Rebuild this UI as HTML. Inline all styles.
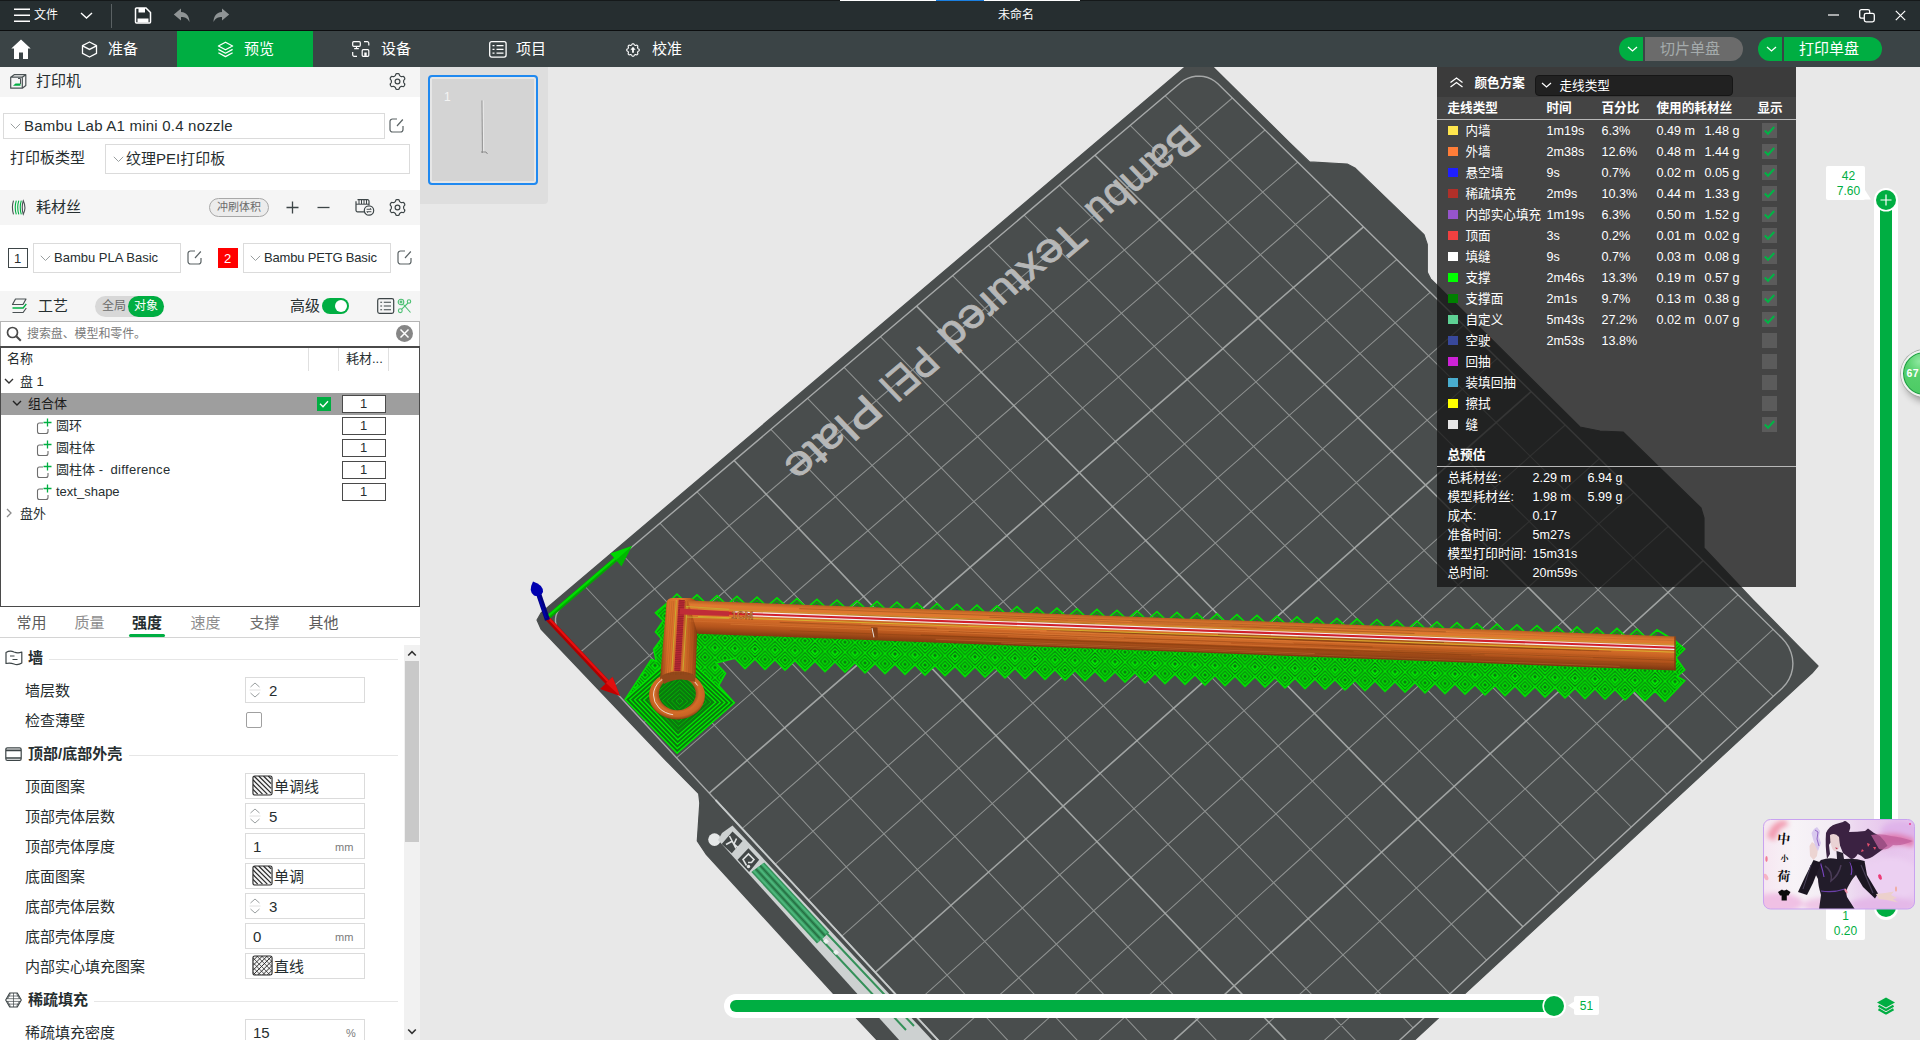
<!DOCTYPE html>
<html lang="zh-CN">
<head>
<meta charset="utf-8">
<title>未命名</title>
<style>
*{box-sizing:border-box;margin:0;padding:0}
html,body{width:1920px;height:1040px;overflow:hidden;background:#e8e8e8}
body{font-family:"Liberation Sans","Noto Sans CJK SC",sans-serif;font-size:15px;color:#262e30;position:relative}
.abs{position:absolute}
.t{position:absolute;white-space:nowrap;line-height:1}
svg{position:absolute;overflow:visible}
/* title bar */
#titlebar{position:absolute;left:0;top:0;width:1920px;height:31px;background:#262e30;border-top:1px solid #15191a;border-bottom:1px solid #0c0e0f}
#tabbar{position:absolute;left:0;top:31px;width:1920px;height:36px;background:#3b4446}
#tabbar .act{position:absolute;left:177px;top:0;width:136px;height:36px;background:#00ae42}
#tabbar .t{color:#fff;font-size:15px;top:10px}
/* sidebar */
#side{position:absolute;left:0;top:67px;width:420px;height:973px;background:#fff}
.sec{position:absolute;left:0;width:420px;background:#f5f5f5}
.box{position:absolute;border:1px solid #dbdbdb;background:#fff}
.lg{font-size:12.600px;color:#fff}
#legend .t{margin-top:1.200px}
</style>
</head>
<body>
<div id="titlebar">
  <div class="abs" style="left:840px;top:-1px;width:240px;height:1px;background:#fff"></div>
  <div class="abs" style="left:936px;top:-1px;width:48px;height:1px;background:#1a7fe0"></div>
  <svg style="left:14px;top:7px" width="17" height="15" viewBox="0 0 17 15"><path d="M0 1.2h16M0 7.2h16M0 13.2h16" stroke="#fff" stroke-width="1.6" fill="none"/></svg>
  <div class="t" style="left:34px;top:8px;font-size:12px;color:#fff">文件</div>
  <svg style="left:80px;top:11px" width="13" height="8" viewBox="0 0 13 8"><path d="M1 1l5.5 5 5.5-5" stroke="#fff" stroke-width="1.4" fill="none"/></svg>
  <div class="abs" style="left:111px;top:3px;width:1px;height:24px;background:#5a6163"></div>
  <svg style="left:135px;top:6px" width="17" height="17" viewBox="0 0 17 17"><path d="M1.5 1h9.5l4.5 4.5v9.5a1 1 0 0 1-1 1h-13a1 1 0 0 1-1-1v-13a1 1 0 0 1 1-1z" fill="none" stroke="#fff" stroke-width="1.5"/><path d="M3.5 1h6.5v4.5h-6.5z" fill="#fff"/><path d="M2.5 11.5h11v4h-11z" fill="#fff"/></svg>
  <svg style="left:173px;top:7px" width="18" height="15" viewBox="0 0 18 15"><path d="M8 0.5L0.8 6.5 8 12.5V9c4 0 6.5 1.2 8.5 5 0-5-2.5-9.5-8.5-10z" fill="#8f9495"/></svg>
  <svg style="left:212px;top:7px" width="18" height="15" viewBox="0 0 18 15"><path d="M10 0.5L17.2 6.5 10 12.5V9c-4 0-6.500 1.2-8.500 5 0-5 2.500-9.500 8.500-10z" fill="#8f9495"/></svg>
  <div class="t" style="left:998px;top:8px;font-size:12px;color:#fff">未命名</div>
  <svg style="left:1828px;top:13px" width="12" height="2"><path d="M0 1h11" stroke="#fff" stroke-width="1.2"/></svg>
  <svg style="left:1859px;top:8px" width="17" height="14" viewBox="0 0 17 14"><rect x="0.7" y="0.7" width="10" height="8.500" rx="1.8" fill="none" stroke="#fff" stroke-width="1.3"/><rect x="5.300" y="4.300" width="10" height="8.500" rx="1.8" fill="#262e30" stroke="#fff" stroke-width="1.3"/></svg>
  <svg style="left:1895px;top:9px" width="11" height="11" viewBox="0 0 11 11"><path d="M0.800 0.800l9.400 9.400M10.200 0.800l-9.400 9.400" stroke="#fff" stroke-width="1.2"/></svg>
</div>
<div id="tabbar">
  <div class="act"></div>
  <svg style="left:11px;top:8px" width="20" height="21" viewBox="0 0 20 21"><path d="M10 0.500L0.300 9.500h2.700v10.500h5v-6.500h4v6.500h5V9.500h2.700z" fill="#fff"/></svg>
  <svg style="left:81px;top:10px" width="17" height="17" viewBox="0 0 17 17"><path d="M8.500 1L15.500 4.600V12.400L8.500 16 1.500 12.400V4.600z" fill="none" stroke="#fff" stroke-width="1.300" stroke-linejoin="round"/><path d="M1.500 4.800L8.500 8.400l7-3.600" fill="none" stroke="#fff" stroke-width="1.300"/></svg>
  <div class="t" style="left:108px">准备</div>
  <svg style="left:217px;top:10px" width="17" height="17" viewBox="0 0 17 17"><path d="M8.500 1.200L15.600 5 8.500 8.800 1.400 5z" fill="none" stroke="#fff" stroke-width="1.300" stroke-linejoin="round"/><path d="M1.400 8.400L8.500 12.200l7.100-3.800M1.400 11.800L8.500 15.600l7.100-3.800" fill="none" stroke="#fff" stroke-width="1.300" stroke-linejoin="round"/></svg>
  <div class="t" style="left:244px">预览</div>
  <svg style="left:352px;top:10px" width="18" height="16" viewBox="0 0 18 16"><rect x="0.700" y="0.700" width="7.600" height="4.600" rx="1" fill="none" stroke="#fff" stroke-width="1.200"/><path d="M4.500 5.300v2.400M2.200 7.700h4.600M12 0.700h3.300a1.500 1.500 0 0 1 1.500 1.500v2.300M0.700 11v2.800a1.500 1.500 0 0 0 1.500 1.500H5" fill="none" stroke="#fff" stroke-width="1.200"/><rect x="10.200" y="8.700" width="6.600" height="6.600" rx="1" fill="none" stroke="#fff" stroke-width="1.200"/><path d="M12.300 11.500h2.400v3.400h-2.400z" fill="#fff"/></svg>
  <div class="t" style="left:381px">设备</div>
  <svg style="left:489px;top:10px" width="18" height="17" viewBox="0 0 18 17"><rect x="0.700" y="0.700" width="16.400" height="15.400" rx="2" fill="none" stroke="#fff" stroke-width="1.300"/><path d="M3.500 4.600h2M3.500 8.400h2M3.500 12.200h2M7.500 4.600h7M7.500 8.400h7M7.500 12.200h7" stroke="#fff" stroke-width="1.300"/></svg>
  <div class="t" style="left:516px">项目</div>
  <svg style="left:626px;top:12px" width="14" height="14" viewBox="0 0 14 14"><path d="M13.30 7.00L13.24 7.41L13.07 7.80L12.59 8.11L12.10 8.37L11.87 8.65L11.71 8.95L11.61 9.27L11.57 9.64L11.74 10.17L11.86 10.73L11.71 11.13L11.45 11.45L11.13 11.71L10.73 11.86L10.17 11.74L9.64 11.57L9.27 11.61L8.95 11.71L8.65 11.87L8.37 12.10L8.11 12.59L7.80 13.07L7.41 13.24L7.00 13.30L6.59 13.24L6.20 13.07L5.89 12.59L5.63 12.10L5.35 11.87L5.05 11.71L4.73 11.61L4.36 11.57L3.83 11.74L3.27 11.86L2.87 11.71L2.55 11.45L2.29 11.13L2.14 10.73L2.26 10.17L2.43 9.64L2.39 9.27L2.29 8.95L2.13 8.65L1.90 8.37L1.41 8.11L0.93 7.80L0.76 7.41L0.70 7.00L0.76 6.59L0.93 6.20L1.41 5.89L1.90 5.63L2.13 5.35L2.29 5.05L2.39 4.73L2.43 4.36L2.26 3.83L2.14 3.27L2.29 2.87L2.55 2.55L2.87 2.29L3.27 2.14L3.83 2.26L4.36 2.43L4.73 2.39L5.05 2.29L5.35 2.13L5.63 1.90L5.89 1.41L6.20 0.93L6.59 0.76L7.00 0.70L7.41 0.76L7.80 0.93L8.11 1.41L8.37 1.90L8.65 2.13L8.95 2.29L9.27 2.39L9.64 2.43L10.17 2.26L10.73 2.14L11.13 2.29L11.45 2.55L11.71 2.87L11.86 3.27L11.74 3.83L11.57 4.36L11.61 4.73L11.71 5.05L11.87 5.35L12.10 5.63L12.59 5.89L13.07 6.20L13.24 6.59Z" fill="none" stroke="#fff" stroke-width="1.100"/><path d="M7 3.800L4.400 6.800h1.700v3h1.800v-3h1.700z" fill="#fff"/></svg>
  <div class="t" style="left:652px">校准</div>
  <!-- slice / print buttons -->
  <div class="abs" style="left:1619px;top:6px;width:24px;height:24px;background:#00ae42;border-radius:12px 0 0 12px"></div>
  <svg style="left:1627px;top:15px" width="11" height="7" viewBox="0 0 11 7"><path d="M1 1l4.500 4 4.500-4" stroke="#fff" stroke-width="1.300" fill="none"/></svg>
  <div class="abs" style="left:1645px;top:6px;width:98px;height:24px;background:#6b6b6b;border-radius:0 12px 12px 0"></div>
  <div class="t" style="left:1660px;top:10px;color:#a5abac;font-size:15px">切片单盘</div>
  <div class="abs" style="left:1758px;top:6px;width:24px;height:24px;background:#00ae42;border-radius:12px 0 0 12px"></div>
  <svg style="left:1766px;top:15px" width="11" height="7" viewBox="0 0 11 7"><path d="M1 1l4.500 4 4.500-4" stroke="#fff" stroke-width="1.300" fill="none"/></svg>
  <div class="abs" style="left:1784px;top:6px;width:98px;height:24px;background:#00ae42;border-radius:0 12px 12px 0"></div>
  <div class="t" style="left:1799px;top:10px;font-size:15px">打印单盘</div>
</div>
<div id="side">
<!-- coordinates inside #side are page y - 67 -->
<div class="sec" style="top:0;height:30px"></div>
<svg style="left:10px;top:7px" width="17" height="15" viewBox="0 0 17 15"><path d="M0.700 3.200h11.600v11h-11.600zM0.700 3.200l3.500-2.500h11.600v10.800l-3.500 2.700M12.300 3.200l3.500-2.500" fill="none" stroke="#4a5254" stroke-width="1.200" stroke-linejoin="round"/><path d="M8 4.500h2.500v5.500" fill="none" stroke="#4a5254" stroke-width="1"/><path d="M3 11.800l2.500-2.200h5v2.200z" fill="#00ae42"/></svg>
<div class="t" style="left:36px;top:6px">打印机</div>
<svg class="gear" style="left:389px;top:6px" width="17" height="17" viewBox="-8.500 -8.500 17 17"><path d="M6.10 0.00L6.11 0.32L6.15 0.65L6.22 0.99L6.35 1.35L6.81 1.82L7.24 2.35L7.28 2.79L7.23 3.22L7.11 3.62L6.93 4.00L6.69 4.35L6.40 4.65L6.06 4.91L5.66 5.09L4.99 4.99L4.34 4.82L3.97 4.90L3.64 5.00L3.33 5.13L3.05 5.28L2.78 5.45L2.52 5.65L2.26 5.88L2.01 6.17L1.82 6.81L1.58 7.44L1.22 7.70L0.83 7.87L0.42 7.97L0.00 8.00L-0.42 7.97L-0.83 7.87L-1.22 7.70L-1.58 7.44L-1.82 6.81L-2.01 6.17L-2.26 5.88L-2.52 5.65L-2.78 5.45L-3.05 5.28L-3.33 5.13L-3.64 5.00L-3.97 4.90L-4.34 4.82L-4.99 4.99L-5.66 5.09L-6.06 4.91L-6.40 4.65L-6.69 4.35L-6.93 4.00L-7.11 3.62L-7.23 3.22L-7.28 2.79L-7.24 2.35L-6.81 1.82L-6.35 1.35L-6.22 0.99L-6.15 0.65L-6.11 0.32L-6.10 0.00L-6.11 -0.32L-6.15 -0.65L-6.22 -0.99L-6.35 -1.35L-6.81 -1.82L-7.24 -2.35L-7.28 -2.79L-7.23 -3.22L-7.11 -3.62L-6.93 -4.00L-6.69 -4.35L-6.40 -4.65L-6.06 -4.91L-5.66 -5.09L-4.99 -4.99L-4.34 -4.82L-3.97 -4.90L-3.64 -5.00L-3.33 -5.13L-3.05 -5.28L-2.78 -5.45L-2.52 -5.65L-2.26 -5.88L-2.01 -6.17L-1.82 -6.81L-1.58 -7.44L-1.22 -7.70L-0.83 -7.87L-0.42 -7.97L-0.00 -8.00L0.42 -7.97L0.83 -7.87L1.22 -7.70L1.58 -7.44L1.82 -6.81L2.01 -6.17L2.26 -5.88L2.52 -5.65L2.78 -5.45L3.05 -5.28L3.33 -5.13L3.64 -5.00L3.97 -4.90L4.34 -4.82L4.99 -4.99L5.66 -5.09L6.06 -4.91L6.40 -4.65L6.69 -4.35L6.93 -4.00L7.11 -3.62L7.23 -3.22L7.28 -2.79L7.24 -2.35L6.81 -1.82L6.35 -1.35L6.22 -0.99L6.15 -0.65L6.11 -0.32Z" fill="none" stroke="#3d4547" stroke-width="1.200" stroke-linejoin="round"/><circle r="2.400" fill="none" stroke="#3d4547" stroke-width="1.200"/></svg>
<div class="box" style="left:3px;top:46px;width:382px;height:26px"></div>
<svg style="left:10px;top:56px" width="11" height="7" viewBox="0 0 11 7"><path d="M0.800 0.800l4.700 4.700 4.700-4.700" stroke="#9a9fa0" stroke-width="1" fill="none"/></svg>
<div class="t" id="prn" style="left:24px;top:51px;font-size:15px;letter-spacing:0.22px">Bambu Lab A1 mini 0.4 nozzle</div>
<svg class="edit" style="left:389px;top:51px" width="15" height="15" viewBox="0 0 15 15"><path d="M8 1H3.500A2.500 2.500 0 0 0 1 3.500v8A2.500 2.500 0 0 0 3.500 14h8a2.500 2.500 0 0 0 2.500-2.500V8" fill="none" stroke="#5a6264" stroke-width="1.200"/><path d="M13.800 1.500L8 8" stroke="#5a6264" stroke-width="1.200"/></svg>
<div class="t" style="left:10px;top:83px">打印板类型</div>
<div class="box" style="left:105px;top:77px;width:305px;height:30px"></div>
<svg style="left:113px;top:89px" width="11" height="7" viewBox="0 0 11 7"><path d="M0.800 0.800l4.700 4.700 4.700-4.700" stroke="#9a9fa0" stroke-width="1" fill="none"/></svg>
<div class="t" style="left:126px;top:84px">纹理PEI打印板</div>

<div class="sec" style="top:123px;height:35px"></div>
<svg style="left:11px;top:133px" width="16" height="15" viewBox="0 0 16 15"><path d="M2.500 0.700Q0.300 7.500 2.500 14.300" fill="none" stroke="#4a5254" stroke-width="1.100"/><path d="M5.300 0.700Q3.100 7.500 5.300 14.300M7.800 0.700Q5.600 7.500 7.800 14.300M10.300 0.700Q8.100 7.500 10.300 14.300" fill="none" stroke="#00ae42" stroke-width="1.100"/><path d="M12.300 0.700Q10.100 7.500 12.300 14.300Q15.500 7.500 12.300 0.700z" fill="none" stroke="#4a5254" stroke-width="1.100"/></svg>
<div class="t" style="left:36px;top:132px">耗材丝</div>
<div class="abs" style="left:209px;top:131px;width:60px;height:19px;border:1px solid #a8a8a8;border-radius:10px;background:#ececec"></div>
<div class="t" style="left:217px;top:135px;font-size:11px;color:#6b6b6b">冲刷体积</div>
<svg style="left:286px;top:134px" width="13" height="13" viewBox="0 0 13 13"><path d="M6.500 0.500v12M0.500 6.500h12" stroke="#3d4547" stroke-width="1.300"/></svg>
<svg style="left:317px;top:139px" width="13" height="3" viewBox="0 0 13 3"><path d="M0.500 1.500h12" stroke="#3d4547" stroke-width="1.300"/></svg>
<svg style="left:355px;top:132px" width="20" height="17" viewBox="0 0 20 17"><path d="M2.500 0.700h10a1.500 1.500 0 0 1 1.500 1.500V6M9 12.800H2.500A1.500 1.500 0 0 1 1 11.300V2.200" fill="none" stroke="#3d4547" stroke-width="1.200"/><path d="M1 5.200h13M4 1v4M6.500 1v4M9 1v4M11.500 1v4" stroke="#3d4547" stroke-width="1"/><circle cx="14" cy="11.500" r="4.700" fill="#f5f5f5" stroke="#3d4547" stroke-width="1.200"/><path d="M11.600 10.300h4.600l-1.200-1.200M16.400 12.700h-4.600l1.200 1.200" fill="none" stroke="#3d4547" stroke-width="0.900"/></svg>
<svg class="gear" style="left:389px;top:132px" width="17" height="17" viewBox="-8.500 -8.500 17 17"><path d="M6.10 0.00L6.11 0.32L6.15 0.65L6.22 0.99L6.35 1.35L6.81 1.82L7.24 2.35L7.28 2.79L7.23 3.22L7.11 3.62L6.93 4.00L6.69 4.35L6.40 4.65L6.06 4.91L5.66 5.09L4.99 4.99L4.34 4.82L3.97 4.90L3.64 5.00L3.33 5.13L3.05 5.28L2.78 5.45L2.52 5.65L2.26 5.88L2.01 6.17L1.82 6.81L1.58 7.44L1.22 7.70L0.83 7.87L0.42 7.97L0.00 8.00L-0.42 7.97L-0.83 7.87L-1.22 7.70L-1.58 7.44L-1.82 6.81L-2.01 6.17L-2.26 5.88L-2.52 5.65L-2.78 5.45L-3.05 5.28L-3.33 5.13L-3.64 5.00L-3.97 4.90L-4.34 4.82L-4.99 4.99L-5.66 5.09L-6.06 4.91L-6.40 4.65L-6.69 4.35L-6.93 4.00L-7.11 3.62L-7.23 3.22L-7.28 2.79L-7.24 2.35L-6.81 1.82L-6.35 1.35L-6.22 0.99L-6.15 0.65L-6.11 0.32L-6.10 0.00L-6.11 -0.32L-6.15 -0.65L-6.22 -0.99L-6.35 -1.35L-6.81 -1.82L-7.24 -2.35L-7.28 -2.79L-7.23 -3.22L-7.11 -3.62L-6.93 -4.00L-6.69 -4.35L-6.40 -4.65L-6.06 -4.91L-5.66 -5.09L-4.99 -4.99L-4.34 -4.82L-3.97 -4.90L-3.64 -5.00L-3.33 -5.13L-3.05 -5.28L-2.78 -5.45L-2.52 -5.65L-2.26 -5.88L-2.01 -6.17L-1.82 -6.81L-1.58 -7.44L-1.22 -7.70L-0.83 -7.87L-0.42 -7.97L-0.00 -8.00L0.42 -7.97L0.83 -7.87L1.22 -7.70L1.58 -7.44L1.82 -6.81L2.01 -6.17L2.26 -5.88L2.52 -5.65L2.78 -5.45L3.05 -5.28L3.33 -5.13L3.64 -5.00L3.97 -4.90L4.34 -4.82L4.99 -4.99L5.66 -5.09L6.06 -4.91L6.40 -4.65L6.69 -4.35L6.93 -4.00L7.11 -3.62L7.23 -3.22L7.28 -2.79L7.24 -2.35L6.81 -1.82L6.35 -1.35L6.22 -0.99L6.15 -0.65L6.11 -0.32Z" fill="none" stroke="#3d4547" stroke-width="1.200" stroke-linejoin="round"/><circle r="2.400" fill="none" stroke="#3d4547" stroke-width="1.200"/></svg>

<div class="abs" style="left:8px;top:181px;width:20px;height:20px;border:1px solid #3d4547;background:#fff"></div>
<div class="t" style="left:14px;top:185px;font-size:13px">1</div>
<div class="box" style="left:33px;top:176px;width:148px;height:30px"></div>
<svg style="left:40px;top:188px" width="11" height="7" viewBox="0 0 11 7"><path d="M0.800 0.800l4.700 4.700 4.700-4.700" stroke="#9a9fa0" stroke-width="1" fill="none"/></svg>
<div class="t" id="f1" style="left:54px;top:184px;font-size:13px">Bambu PLA Basic</div>
<svg class="edit" style="left:187px;top:183px" width="15" height="15" viewBox="0 0 15 15"><path d="M8 1H3.500A2.500 2.500 0 0 0 1 3.500v8A2.500 2.500 0 0 0 3.500 14h8a2.500 2.500 0 0 0 2.500-2.500V8" fill="none" stroke="#5a6264" stroke-width="1.200"/><path d="M13.800 1.500L8 8" stroke="#5a6264" stroke-width="1.200"/></svg>
<div class="abs" style="left:218px;top:181px;width:20px;height:20px;background:#f00"></div>
<div class="t" style="left:224px;top:185px;font-size:13px;color:#fff">2</div>
<div class="box" style="left:243px;top:176px;width:148px;height:30px"></div>
<svg style="left:250px;top:188px" width="11" height="7" viewBox="0 0 11 7"><path d="M0.800 0.800l4.700 4.700 4.700-4.700" stroke="#9a9fa0" stroke-width="1" fill="none"/></svg>
<div class="t" id="f2" style="left:264px;top:184px;font-size:13px;letter-spacing:-0.18px">Bambu PETG Basic</div>
<svg class="edit" style="left:397px;top:183px" width="15" height="15" viewBox="0 0 15 15"><path d="M8 1H3.500A2.500 2.500 0 0 0 1 3.500v8A2.500 2.500 0 0 0 3.500 14h8a2.500 2.500 0 0 0 2.500-2.500V8" fill="none" stroke="#5a6264" stroke-width="1.200"/><path d="M13.800 1.500L8 8" stroke="#5a6264" stroke-width="1.200"/></svg>
<!-- process header: page y 291..321 -> local 224..254 -->
<div class="sec" style="top:224px;height:30px"></div>
<svg style="left:11px;top:231px" width="17" height="16" viewBox="0 0 17 16"><path d="M4.500 1h10.500l-3 5.500H1.500z" fill="none" stroke="#4a5254" stroke-width="1.200" stroke-linejoin="round"/><path d="M15.300 6l-3.200 4H1.500" fill="none" stroke="#00ae42" stroke-width="1.300" stroke-linejoin="round"/><path d="M15.300 10l-3.200 4.500H1.500" fill="none" stroke="#4a5254" stroke-width="1.200" stroke-linejoin="round"/></svg>
<div class="t" style="left:38px;top:231px">工艺</div>
<div class="abs" style="left:95px;top:229px;width:69px;height:21px;border-radius:11px;background:#d8d8d8"></div>
<div class="abs" style="left:128px;top:229px;width:36px;height:21px;border-radius:11px;background:#00ae42"></div>
<div class="t" style="left:102px;top:233px;font-size:12px;color:#6b6b6b">全局</div>
<div class="t" style="left:134px;top:233px;font-size:12px;color:#fff">对象</div>
<div class="t" style="left:290px;top:231px">高级</div>
<div class="abs" style="left:322px;top:231px;width:27px;height:16px;border-radius:8px;background:#00ae42"></div>
<div class="abs" style="left:335px;top:233px;width:12px;height:12px;border-radius:6px;background:#fff"></div>
<svg style="left:377px;top:231px" width="18" height="16" viewBox="0 0 18 16"><rect x="0.700" y="0.700" width="16" height="14.600" rx="1.800" fill="none" stroke="#3d4547" stroke-width="1.200"/><path d="M3.300 4.300h1.800M3.300 8h1.800M3.300 11.700h1.800M6.800 4.300h7.200M6.800 8h7.200M6.800 11.700h7.200" stroke="#3d4547" stroke-width="1.100"/></svg>
<svg style="left:397px;top:231px" width="15" height="16" viewBox="0 0 15 16"><g fill="none" stroke="#4cbf72" stroke-width="1.100"><circle cx="4" cy="4" r="2.800"/><circle cx="4" cy="4" r="0.900"/><circle cx="12" cy="3.500" r="1.700"/><circle cx="3.300" cy="12.700" r="1.900"/><path d="M6.500 6.500l7 8M11 5l-6.500 6.300"/></g></svg>
<!-- search: page y 321..346 -> local 254..279 -->
<div class="abs" style="left:0;top:254px;width:420px;height:25px;border:1px solid #b4b4b4;border-bottom:none;background:#fff"></div>
<svg style="left:6px;top:259px" width="16" height="16" viewBox="0 0 16 16"><circle cx="6.500" cy="6.500" r="5" fill="none" stroke="#4a4a4a" stroke-width="1.700"/><path d="M10.300 10.300l4.500 4.500" stroke="#4a4a4a" stroke-width="2"/></svg>
<div class="t" id="srch" style="left:27px;top:260.500px;font-size:12px;letter-spacing:-0.100px;color:#7a7a7a">搜索盘、模型和零件。</div>
<svg style="left:396px;top:258px" width="17" height="17" viewBox="0 0 17 17"><circle cx="8.500" cy="8.500" r="8.500" fill="#868686"/><path d="M4.500 4.500l8 8M12.500 4.500l-8 8" stroke="#fff" stroke-width="1.500"/></svg>
<!-- tree: page y 346..607 -> local 279..540 -->
<div class="abs" style="left:0;top:279px;width:420px;height:261px;border:1px solid #4a4a4a;border-top-width:2px;background:#fff"></div>
<div class="t" style="left:7px;top:285px;font-size:13px">名称</div>
<div class="abs" style="left:308px;top:281px;width:1px;height:23px;background:#e0e0e0"></div>
<div class="abs" style="left:338px;top:281px;width:1px;height:23px;background:#e0e0e0"></div>
<div class="abs" style="left:388px;top:281px;width:1px;height:23px;background:#e0e0e0"></div>
<div class="t" style="left:346px;top:285px;font-size:13px">耗材...</div>
<!-- rows: centers local 314.5, 336.5 ... -->
<svg style="left:4px;top:311px" width="10" height="7" viewBox="0 0 10 7"><path d="M1 1l4 4 4-4" stroke="#333" stroke-width="1.400" fill="none"/></svg>
<div class="t" style="left:20px;top:308px;font-size:13px">盘 1</div>
<div class="abs" style="left:1px;top:326px;width:418px;height:22px;background:#9e9e9e"></div>
<svg style="left:12px;top:333px" width="10" height="7" viewBox="0 0 10 7"><path d="M1 1l4 4 4-4" stroke="#222" stroke-width="1.400" fill="none"/></svg>
<div class="t" style="left:28px;top:330px;font-size:13px;color:#1a1a1a">组合体</div>
<div class="abs" style="left:317px;top:330px;width:14px;height:14px;background:#00ae42"></div>
<svg style="left:319px;top:333px" width="10" height="8" viewBox="0 0 10 8"><path d="M1 3.800l3 3L9 1.200" stroke="#fff" stroke-width="1.300" fill="none"/></svg>
<div class="abs" style="left:342px;top:328.0px;width:44px;height:18px;border:1px solid #4a4a4a;background:#fff"></div>
<div class="t" style="left:360px;top:330.0px;font-size:13px">1</div>
<div class="abs" style="left:342px;top:350.0px;width:44px;height:18px;border:1px solid #4a4a4a;background:#fff"></div>
<div class="t" style="left:360px;top:352.0px;font-size:13px">1</div>
<div class="abs" style="left:342px;top:372.0px;width:44px;height:18px;border:1px solid #4a4a4a;background:#fff"></div>
<div class="t" style="left:360px;top:374.0px;font-size:13px">1</div>
<div class="abs" style="left:342px;top:394.0px;width:44px;height:18px;border:1px solid #4a4a4a;background:#fff"></div>
<div class="t" style="left:360px;top:396.0px;font-size:13px">1</div>
<div class="abs" style="left:342px;top:416.0px;width:44px;height:18px;border:1px solid #4a4a4a;background:#fff"></div>
<div class="t" style="left:360px;top:418.0px;font-size:13px">1</div>
<svg style="left:36px;top:350.5px" width="16" height="17" viewBox="0 0 16 17"><path d="M7 5H3.500A2 2 0 0 0 1.500 7v6.500A2 2 0 0 0 3.500 15.500h6.500a2 2 0 0 0 2-2V11" fill="none" stroke="#6e6e6e" stroke-width="1.100"/><path d="M11.500 0.500v8M7.500 4.500h8" stroke="#00ae42" stroke-width="1.300"/></svg>
<div class="t" style="left:56px;top:352.0px;font-size:13px">圆环</div>
<svg style="left:36px;top:372.5px" width="16" height="17" viewBox="0 0 16 17"><path d="M7 5H3.500A2 2 0 0 0 1.500 7v6.500A2 2 0 0 0 3.500 15.500h6.500a2 2 0 0 0 2-2V11" fill="none" stroke="#6e6e6e" stroke-width="1.100"/><path d="M11.500 0.500v8M7.500 4.500h8" stroke="#00ae42" stroke-width="1.300"/></svg>
<div class="t" style="left:56px;top:374.0px;font-size:13px">圆柱体</div>
<svg style="left:36px;top:394.5px" width="16" height="17" viewBox="0 0 16 17"><path d="M7 5H3.500A2 2 0 0 0 1.500 7v6.500A2 2 0 0 0 3.500 15.500h6.500a2 2 0 0 0 2-2V11" fill="none" stroke="#6e6e6e" stroke-width="1.100"/><path d="M11.500 0.500v8M7.500 4.500h8" stroke="#00ae42" stroke-width="1.300"/></svg>
<div class="t" style="left:56px;top:396.0px;font-size:13px">圆柱体 <span style="letter-spacing:2px">- </span><span style="letter-spacing:0.3px">difference</span></div>
<svg style="left:36px;top:416.5px" width="16" height="17" viewBox="0 0 16 17"><path d="M7 5H3.500A2 2 0 0 0 1.500 7v6.500A2 2 0 0 0 3.500 15.500h6.500a2 2 0 0 0 2-2V11" fill="none" stroke="#6e6e6e" stroke-width="1.100"/><path d="M11.500 0.500v8M7.500 4.500h8" stroke="#00ae42" stroke-width="1.300"/></svg>
<div class="t" style="left:56px;top:418.0px;font-size:13px">text_shape</div>
<svg style="left:6px;top:441px" width="7" height="10" viewBox="0 0 7 10"><path d="M1 1l4 4-4 4" stroke="#8a8a8a" stroke-width="1.300" fill="none"/></svg>
<div class="t" style="left:20px;top:440px;font-size:13px">盘外</div>
<div class="t" style="left:16.5px;top:548px;font-size:15px;color:#5c5c5c;">常用</div>
<div class="t" style="left:74.5px;top:548px;font-size:15px;color:#8e8e8e;">质量</div>
<div class="t" style="left:132px;top:548px;font-size:15px;color:#262e30;font-weight:bold;">强度</div>
<div class="t" style="left:190.5px;top:548px;font-size:15px;color:#8e8e8e;">速度</div>
<div class="t" style="left:249.5px;top:548px;font-size:15px;color:#6e6e6e;">支撑</div>
<div class="t" style="left:308.5px;top:548px;font-size:15px;color:#5c5c5c;">其他</div>
<div class="abs" style="left:129px;top:567px;width:36px;height:3px;border-radius:1.5px;background:#00ae42"></div>
<div class="abs" style="left:0;top:570px;width:420px;height:1px;background:#d4d4d4"></div>
<div class="abs" style="left:404px;top:578px;width:16px;height:395px;background:#f1f1f1"></div>
<div class="abs" style="left:405px;top:594px;width:14px;height:181px;background:#c9c9c9"></div>
<svg style="left:407px;top:583px" width="10" height="7" viewBox="0 0 10 7"><path d="M1.200 5.500l3.800-3.800 3.800 3.800" stroke="#333" stroke-width="1.600" fill="none"/></svg>
<svg style="left:407px;top:961px" width="10" height="7" viewBox="0 0 10 7"><path d="M1.200 1.500l3.800 3.800 3.800-3.800" stroke="#333" stroke-width="1.600" fill="none"/></svg>
<svg style="left:5px;top:583.0px" width="18" height="16" viewBox="0 0 18 16"><path d="M1 2.500Q5 0.200 9 2 Q13 3.600 16.800 2v11Q13 15.500 9 14Q5 12.400 1 13.500z" fill="none" stroke="#3d4547" stroke-width="1.200" stroke-linejoin="round"/><path d="M5 6h4.500M7.500 9.500h5" stroke="#3d4547" stroke-width="1.100"/></svg>
<div class="t" style="left:28px;top:582.5px;font-size:15px;font-weight:bold;color:#262e30">墙</div>
<div class="abs" style="left:49px;top:591.5px;width:349px;height:1px;background:#e6e6e6"></div>
<svg style="left:5px;top:679.0px" width="17" height="16" viewBox="0 0 17 16"><rect x="0.800" y="1.800" width="15.400" height="12.600" rx="1.600" fill="none" stroke="#3d4547" stroke-width="1.200"/><path d="M1 4.300h15M1 12h15" stroke="#3d4547" stroke-width="1.700"/></svg>
<div class="t" style="left:28px;top:678.5px;font-size:15px;font-weight:bold;color:#262e30">顶部/底部外壳</div>
<div class="abs" style="left:129px;top:687.5px;width:269px;height:1px;background:#e6e6e6"></div>
<svg style="left:5px;top:925.0px" width="17" height="16" viewBox="0 0 17 16"><path d="M4.700 1h7.600L16.300 8l-4 7H4.700L0.700 8z" fill="none" stroke="#3d4547" stroke-width="1.100"/><path d="M3 4h11M1.500 6.700h14M1.500 9.400h14M3 12.100h11M5.500 1.500l-3 5.500M8.500 1v14M11.500 1.500l3 5.500M5.500 14.500l-3-5.500M11.500 14.500l3-5.500" stroke="#3d4547" stroke-width="0.700"/></svg>
<div class="t" style="left:28px;top:924.5px;font-size:15px;font-weight:bold;color:#262e30">稀疏填充</div>
<div class="abs" style="left:94px;top:933.5px;width:304px;height:1px;background:#e6e6e6"></div>
<div class="t" style="left:25px;top:615.7px;font-size:15px;color:#262e30">墙层数</div>
<div class="box" style="left:245px;top:610.0px;width:120px;height:25.500px"></div>
<svg style="left:249px;top:613.5px" width="12" height="18" viewBox="0 0 12 18"><path d="M1.500 6l4.500-4 4.500 4M1.500 12l4.500 4 4.500-4" stroke="#9a9fa0" stroke-width="1" fill="none"/><path d="M0.500 9h11" stroke="#e0e0e0" stroke-width="1"/></svg>
<div class="t" style="left:269px;top:615.7px;font-size:15px">2</div>
<div class="t" style="left:25px;top:645.7px;font-size:15px;color:#262e30">检查薄壁</div>
<div class="abs" style="left:246px;top:645px;width:16px;height:16px;border:1px solid #a0a0a0;border-radius:2px;background:#fff"></div>
<div class="t" style="left:25px;top:711.7px;font-size:15px;color:#262e30">顶面图案</div>
<div class="box" style="left:245px;top:706.0px;width:120px;height:25.500px"></div>
<svg style="left:251.5px;top:708.0px" width="21" height="21" viewBox="0 0 22 22"><defs><clipPath id="cp785"><rect x="1" y="1" width="20" height="20" rx="2"/></clipPath></defs><rect x="1" y="1" width="20" height="20" rx="2" fill="#f4f4f4" stroke="#2a2a2a" stroke-width="1.200"/><g clip-path="url(#cp785)"><path d="M2 1L20 19M7 1L20 14M12 1L20 9M17 1L20 4M1 5L16 20M1 10L11 20M1 15L6 20" stroke="#2a2a2a" stroke-width="1.300"/></g></svg>
<div class="t" style="left:274px;top:711.7px;font-size:15px">单调线</div>
<div class="t" style="left:25px;top:741.7px;font-size:15px;color:#262e30">顶部壳体层数</div>
<div class="box" style="left:245px;top:736.0px;width:120px;height:25.500px"></div>
<svg style="left:249px;top:739.5px" width="12" height="18" viewBox="0 0 12 18"><path d="M1.500 6l4.500-4 4.500 4M1.500 12l4.500 4 4.500-4" stroke="#9a9fa0" stroke-width="1" fill="none"/><path d="M0.500 9h11" stroke="#e0e0e0" stroke-width="1"/></svg>
<div class="t" style="left:269px;top:741.7px;font-size:15px">5</div>
<div class="t" style="left:25px;top:771.7px;font-size:15px;color:#262e30">顶部壳体厚度</div>
<div class="box" style="left:245px;top:766.0px;width:120px;height:25.500px"></div>
<div class="t" style="left:253px;top:771.7px;font-size:15px">1</div>
<div class="t" style="left:335px;top:775.0px;font-size:11px;color:#7a7a7a">mm</div>
<div class="t" style="left:25px;top:801.7px;font-size:15px;color:#262e30">底面图案</div>
<div class="box" style="left:245px;top:796.0px;width:120px;height:25.500px"></div>
<svg style="left:251.5px;top:798.0px" width="21" height="21" viewBox="0 0 22 22"><defs><clipPath id="cp875"><rect x="1" y="1" width="20" height="20" rx="2"/></clipPath></defs><rect x="1" y="1" width="20" height="20" rx="2" fill="#f4f4f4" stroke="#2a2a2a" stroke-width="1.200"/><g clip-path="url(#cp875)"><path d="M2 1L20 19M7 1L20 14M12 1L20 9M17 1L20 4M1 5L16 20M1 10L11 20M1 15L6 20" stroke="#2a2a2a" stroke-width="1.300"/></g></svg>
<div class="t" style="left:274px;top:801.7px;font-size:15px">单调</div>
<div class="t" style="left:25px;top:831.7px;font-size:15px;color:#262e30">底部壳体层数</div>
<div class="box" style="left:245px;top:826.0px;width:120px;height:25.500px"></div>
<svg style="left:249px;top:829.5px" width="12" height="18" viewBox="0 0 12 18"><path d="M1.500 6l4.500-4 4.500 4M1.500 12l4.500 4 4.500-4" stroke="#9a9fa0" stroke-width="1" fill="none"/><path d="M0.500 9h11" stroke="#e0e0e0" stroke-width="1"/></svg>
<div class="t" style="left:269px;top:831.7px;font-size:15px">3</div>
<div class="t" style="left:25px;top:861.7px;font-size:15px;color:#262e30">底部壳体厚度</div>
<div class="box" style="left:245px;top:856.0px;width:120px;height:25.500px"></div>
<div class="t" style="left:253px;top:861.7px;font-size:15px">0</div>
<div class="t" style="left:335px;top:865.0px;font-size:11px;color:#7a7a7a">mm</div>
<div class="t" style="left:25px;top:891.7px;font-size:15px;color:#262e30">内部实心填充图案</div>
<div class="box" style="left:245px;top:886.0px;width:120px;height:25.500px"></div>
<svg style="left:251.5px;top:888.0px" width="21" height="21" viewBox="0 0 22 22"><defs><clipPath id="cp965"><rect x="1" y="1" width="20" height="20" rx="2"/></clipPath></defs><rect x="1" y="1" width="20" height="20" rx="2" fill="#f4f4f4" stroke="#2a2a2a" stroke-width="1.200"/><g clip-path="url(#cp965)"><path d="M1 6L6 1M1 11L11 1M1 16L16 1M1 21L21 1M6 21L21 6M11 21L21 11M16 21L21 16" stroke="#2a2a2a" stroke-width="1"/><path d="M5 1L21 17M10 1L21 12M15 1L21 7M1 3L19 21M1 8L14 21M1 13L9 21M1 18L4 21" stroke="#2a2a2a" stroke-width="0.800"/></g></svg>
<div class="t" style="left:274px;top:891.7px;font-size:15px">直线</div>
<div class="t" style="left:25px;top:957.7px;font-size:15px;color:#262e30">稀疏填充密度</div>
<div class="box" style="left:245px;top:952.0px;width:120px;height:25.500px"></div>
<div class="t" style="left:253px;top:957.7px;font-size:15px">15</div>
<div class="t" style="left:346px;top:961.0px;font-size:11px;color:#7a7a7a">%</div>
</div><!-- /side -->
<svg id="scene" style="left:420px;top:67px" width="1500" height="973" viewBox="420 67 1500 973">
<defs><clipPath id="vp"><rect x="420" y="67" width="1500" height="973"/></clipPath>
<linearGradient id="rodg" x1="0" y1="0" x2="0" y2="1"><stop offset="0" stop-color="#b85f22"/><stop offset="0.12" stop-color="#e07a30"/><stop offset="0.45" stop-color="#d9702a"/><stop offset="0.75" stop-color="#b4541c"/><stop offset="1" stop-color="#7a3610"/></linearGradient>
<linearGradient id="rodv" x1="0" y1="0" x2="1" y2="0"><stop offset="0" stop-color="#8a3f14"/><stop offset="0.2" stop-color="#d9702a"/><stop offset="0.55" stop-color="#e07a30"/><stop offset="0.85" stop-color="#b4541c"/><stop offset="1" stop-color="#7a3610"/></linearGradient>
<pattern id="sup" width="20" height="20" patternUnits="userSpaceOnUse" patternTransform="translate(-5 602.02) skewY(2.033)"><rect width="20" height="20" fill="#0c7410"/><g fill="none" stroke="#00ea00" stroke-width="1.350"><path d="M10 7L13 10L10 13L7 10Z"/><path d="M10 3.500L16.500 10L10 16.500L3.500 10Z"/><path d="M10 0L20 10L10 20L0 10Z"/><path d="M0 -3L3 0L0 3M0 17L3 20L0 23M20 -3L17 0L20 3M20 17L17 20L20 23"/><path d="M-3 -3.500L3.500 3L0 6.500L-3.500 3M23 -3.500L16.500 3L20 6.500L23.500 3" transform="translate(0 -3)"/><path d="M0 13.500L6.500 20L0 26.500M20 13.500L13.500 20L20 26.500M0 -6.500L6.500 0L0 6.500M20 -6.500L13.500 0L20 6.500"/></g></pattern>
</defs>
<g clip-path="url(#vp)">
<path d="M537.0 620.0 L541.0 613.0 L1185.0 67.0 L1199.0 55.0 L1213.0 67.0 L1290.0 143.1 L1309.6 161.9 L1347.2 164.0 L1355.4 168.4 L1424.0 234.6 L1427.3 244.4 L1427.3 272.2 L1430.6 278.8 L1436.3 284.5 L1580.0 427.0 L1600.0 431.0 L1623.0 432.0 L1701.0 508.0 L1704.0 518.0 L1704.0 548.0 L1753.0 600.0 L1812.0 660.0 L1818.0 666.0 L1812.0 673.0 L1414.6 1040.0 L1380.0 1060.0 L900.0 1060.0 L877.0 1040.0 L833.9 994.0 L706.0 854.0 L697.3 840.8 L699.8 803.0 L698.7 793.7 L665.6 760.0 L541.0 629.0Z" fill="#494d4d" stroke="#494d4d" stroke-width="1.2" stroke-linejoin="round"/>
<path d="M579.4 653.0L1232.4 98.0M585.1 586.5L1188.6 1234.4M611.6 687.8L1265.0 130.0M622.6 554.8L1226.4 1199.5M644.0 722.7L1297.7 162.1M659.9 523.2L1264.1 1164.8M676.5 757.8L1330.5 194.4M697.1 491.8L1301.6 1130.3M742.1 828.6L1396.7 259.5M770.9 429.3L1376.1 1061.8M775.1 864.3L1430.1 292.3M807.6 398.3L1413.1 1027.8M808.4 900.1L1463.6 325.2M844.1 367.4L1449.9 993.9M841.8 936.2L1497.3 358.3M880.4 336.7L1486.5 960.2M909.1 1008.8L1565.2 425.0M952.6 275.6L1559.2 893.3M943.0 1045.5L1599.4 458.7M988.4 245.3L1595.3 860.1M977.1 1082.3L1633.8 492.4M1024.1 215.1L1631.2 827.0M1011.5 1119.3L1668.3 526.4M1059.6 185.1L1667.0 794.1M1080.6 1194.0L1738.0 594.9M1130.2 125.4L1738.0 728.8M1115.5 1231.6L1773.1 629.4M1165.2 95.8L1773.3 696.3" stroke="#a9acab" stroke-opacity="0.72" stroke-width="1.05" fill="none"/>
<path d="M709.2 793.1L1363.5 226.9M734.1 460.5L1339.0 1096.0M875.3 972.4L1531.1 391.6M916.6 306.1L1522.9 926.7M1045.9 1156.5L1703.1 560.6M1095.0 155.2L1702.6 761.4" stroke="#acafae" stroke-opacity="0.88" stroke-width="1.6" fill="none"/>
<path d="M562.5 605.7 L560.3 607.8 L558.4 610.3 L557.0 613.0 L556.0 615.8 L555.5 618.7 L555.5 621.7 L556.0 624.6 L557.0 627.3 L558.4 629.9 L560.2 632.2 L1129.5 1246.7 L1133.0 1250.0 L1137.1 1252.7 L1141.5 1254.7 L1146.2 1256.0 L1151.0 1256.6 L1155.9 1256.4 L1160.7 1255.4 L1165.3 1253.8 L1169.5 1251.4 L1173.4 1248.4 L1782.1 688.2 L1785.9 684.1 L1788.9 679.5 L1791.1 674.4 L1792.5 669.0 L1792.9 663.5 L1792.4 657.9 L1791.0 652.4 L1788.8 647.2 L1785.7 642.4 L1781.9 638.0 L1217.9 83.7 L1214.8 81.2 L1211.4 79.1 L1207.7 77.5 L1203.7 76.5 L1199.7 76.1 L1195.6 76.3 L1191.6 77.0 L1187.7 78.3 L1184.1 80.1 L1180.9 82.5Z" stroke="#b0b3b2" stroke-opacity="0.9" stroke-width="1.4" fill="none"/>
<g transform="matrix(-0.7625 0.647 -0.69 -0.72 1183 122.8)" font-family="Liberation Sans, sans-serif" font-size="42.5" fill="#b6b7b7" stroke="#b6b7b7" stroke-width="0.9"><text x="0" y="0" textLength="131.5" lengthAdjust="spacingAndGlyphs">Bambu</text><text x="149.6" y="0" textLength="175.7" lengthAdjust="spacingAndGlyphs">Textured</text><text x="342.5" y="0" textLength="59.5" lengthAdjust="spacingAndGlyphs">PEI</text><text x="417" y="0" textLength="110.0" lengthAdjust="spacingAndGlyphs">Plate</text></g>
<path d="M715.5 799.9L944.3 1046.9" stroke="#c6caca" stroke-width="1.900"/>
<circle cx="714.500" cy="839.600" r="6.300" fill="#e6e8e8"/>
<path d="M718 840L722 833L732.500 825.500L933 1041L900 1041Z" fill="#cdd1d1"/>
<path d="M732.500 831.600L742.600 841L731.800 853.300L721.700 843.900Z M748.400 848.200L759.200 859.700L749.100 872L737.600 859.700Z" fill="#424747"/>
<path d="M729.500 836l6.500 12.500M726 844.500l6.500-3.500M736.500 838.500l-2.500 5.500l4 3.500" stroke="#dfe2e2" stroke-width="1.600" fill="none"/>
<path d="M746.500 865.500l-3.500-6l5.500-5.500l5.500 5.500l-2.500 3h-3.500" stroke="#dfe2e2" stroke-width="1.600" fill="none"/><circle cx="748.500" cy="866.500" r="1.700" fill="#e6e8e8"/>
<path d="M751.300 872L764.300 862.600L829.100 932.600L816.900 943.400Z" fill="#35915a"/>
<path d="M753.500 870.400L819 941.500M758 867.200L823.200 938M762.300 864L827.300 934.300" stroke="#4bb57a" stroke-width="2.200"/>
<path d="M755.800 868.800L821 939.700M760.200 865.600L825.200 936.200" stroke="#256c42" stroke-width="1.100"/>
<path d="M820 938L906 1030M826.500 933L914 1026" stroke="#35915a" stroke-width="2"/>
<path d="M823 941l3-2.500 3 3-3 2.500zM833 952l3-2.500 3 3-3 2.500z" fill="#eef0f0"/>
<path d="M677.0 604.2 L1666.0 640.3 L1676.0 641.4 L1684.7 649.0 L1676.0 657.8 L1684.7 669.9 L1677.0 676.4 L1684.7 680.8 L1675.0 691.0 L1665.0 701.3 L1655.0 690.9 L1645.0 700.6 L1635.0 690.2 L1625.0 699.9 L1615.0 689.5 L1605.0 699.2 L1595.0 688.8 L1585.0 698.5 L1575.0 688.1 L1565.0 697.8 L1555.0 687.4 L1545.0 697.0 L1535.0 686.7 L1525.0 696.3 L1515.0 686.0 L1505.0 695.6 L1495.0 685.3 L1485.0 694.9 L1475.0 684.6 L1465.0 694.2 L1455.0 683.8 L1445.0 693.5 L1435.0 683.1 L1425.0 692.8 L1415.0 682.4 L1405.0 692.1 L1395.0 681.7 L1385.0 691.4 L1375.0 681.0 L1365.0 690.7 L1355.0 680.3 L1345.0 689.9 L1335.0 679.6 L1325.0 689.2 L1315.0 678.9 L1305.0 688.5 L1295.0 678.2 L1285.0 687.8 L1275.0 677.5 L1265.0 687.1 L1255.0 676.7 L1245.0 686.4 L1235.0 676.0 L1225.0 685.7 L1215.0 675.3 L1205.0 685.0 L1195.0 674.6 L1185.0 684.3 L1175.0 673.9 L1165.0 683.6 L1155.0 673.2 L1145.0 682.8 L1135.0 672.5 L1125.0 682.1 L1115.0 671.8 L1105.0 681.4 L1095.0 671.1 L1085.0 680.7 L1075.0 670.4 L1065.0 680.0 L1055.0 669.6 L1045.0 679.3 L1035.0 668.9 L1025.0 678.6 L1015.0 668.2 L1005.0 677.9 L995.0 667.5 L985.0 677.2 L975.0 666.8 L965.0 676.5 L955.0 666.1 L945.0 675.7 L935.0 665.4 L925.0 675.0 L915.0 664.7 L905.0 674.3 L895.0 664.0 L885.0 673.6 L875.0 663.3 L865.0 672.9 L855.0 662.5 L845.0 672.2 L835.0 661.8 L825.0 671.5 L815.0 661.1 L805.0 670.8 L795.0 660.4 L785.0 670.1 L775.0 659.7 L765.0 669.4 L755.0 659.0 L745.0 668.6 L735.0 658.3 L716.0 663.0 L725.5 673.4 L718.6 685.5 L734.2 702.8 L677.1 753.0 L625.2 699.4 L651.1 659.6 L656.3 661.3 L653.7 649.2 L661.5 638.8 L655.5 631.9 L663.3 620.7 L655.5 612.9 L671.9 599.0Z" fill="url(#sup)" stroke="#00e000" stroke-width="1.600" stroke-linejoin="miter"/>
<path d="M671.9 599.0 L677.0 594.2 L687.0 603.6 L697.0 595.0 L707.0 604.3 L717.0 595.7 L727.0 605.0 L737.0 596.4 L747.0 605.8 L757.0 597.1 L767.0 606.5 L777.0 597.9 L787.0 607.2 L797.0 598.6 L807.0 608.0 L817.0 599.3 L827.0 608.7 L837.0 600.1 L847.0 609.4 L857.0 600.8 L867.0 610.1 L877.0 601.5 L887.0 610.9 L897.0 602.2 L907.0 611.6 L917.0 603.0 L927.0 612.3 L937.0 603.7 L947.0 613.1 L957.0 604.4 L967.0 613.8 L977.0 605.2 L987.0 614.5 L997.0 605.9 L1007.0 615.2 L1017.0 606.6 L1027.0 616.0 L1037.0 607.3 L1047.0 616.7 L1057.0 608.1 L1067.0 617.4 L1077.0 608.8 L1087.0 618.2 L1097.0 609.5 L1107.0 618.9 L1117.0 610.3 L1127.0 619.6 L1137.0 611.0 L1147.0 620.3 L1157.0 611.7 L1167.0 621.1 L1177.0 612.4 L1187.0 621.8 L1197.0 613.2 L1207.0 622.5 L1217.0 613.9 L1227.0 623.3 L1237.0 614.6 L1247.0 624.0 L1257.0 615.4 L1267.0 624.7 L1277.0 616.1 L1287.0 625.4 L1297.0 616.8 L1307.0 626.2 L1317.0 617.5 L1327.0 626.9 L1337.0 618.3 L1347.0 627.6 L1357.0 619.0 L1367.0 628.4 L1377.0 619.7 L1387.0 629.1 L1397.0 620.5 L1407.0 629.8 L1417.0 621.2 L1427.0 630.5 L1437.0 621.9 L1447.0 631.3 L1457.0 622.6 L1467.0 632.0 L1477.0 623.4 L1487.0 632.7 L1497.0 624.1 L1507.0 633.5 L1517.0 624.8 L1527.0 634.2 L1537.0 625.6 L1547.0 634.9 L1557.0 626.3 L1567.0 635.6 L1577.0 627.0 L1587.0 636.4 L1597.0 627.7 L1607.0 637.1 L1617.0 628.5 L1627.0 637.8 L1637.0 629.2 L1647.0 638.6 L1657.0 629.9 L1676.0 641.4" fill="none" stroke="#00e000" stroke-width="1.700" stroke-linejoin="miter"/>
<path d="M677.0 597.4 L687.0 606.8 L697.0 598.2 L707.0 607.5 L717.0 598.9 L727.0 608.2 L737.0 599.6 L747.0 609.0 L757.0 600.3 L767.0 609.7 L777.0 601.1 L787.0 610.4 L797.0 601.8 L807.0 611.2 L817.0 602.5 L827.0 611.9 L837.0 603.3 L847.0 612.6 L857.0 604.0 L867.0 613.3 L877.0 604.7 L887.0 614.1 L897.0 605.4 L907.0 614.8 L917.0 606.2 L927.0 615.5 L937.0 606.9 L947.0 616.3 L957.0 607.6 L967.0 617.0 L977.0 608.4 L987.0 617.7 L997.0 609.1 L1007.0 618.4 L1017.0 609.8 L1027.0 619.2 L1037.0 610.5 L1047.0 619.9 L1057.0 611.3 L1067.0 620.6 L1077.0 612.0 L1087.0 621.4 L1097.0 612.7 L1107.0 622.1 L1117.0 613.5 L1127.0 622.8 L1137.0 614.2 L1147.0 623.5 L1157.0 614.9 L1167.0 624.3 L1177.0 615.6 L1187.0 625.0 L1197.0 616.4 L1207.0 625.7 L1217.0 617.1 L1227.0 626.5 L1237.0 617.8 L1247.0 627.2 L1257.0 618.6 L1267.0 627.9 L1277.0 619.3 L1287.0 628.6 L1297.0 620.0 L1307.0 629.4 L1317.0 620.7 L1327.0 630.1 L1337.0 621.5 L1347.0 630.8 L1357.0 622.2 L1367.0 631.6 L1377.0 622.9 L1387.0 632.3 L1397.0 623.7 L1407.0 633.0 L1417.0 624.4 L1427.0 633.7 L1437.0 625.1 L1447.0 634.5 L1457.0 625.8 L1467.0 635.2 L1477.0 626.6 L1487.0 635.9 L1497.0 627.3 L1507.0 636.7 L1517.0 628.0 L1527.0 637.4 L1537.0 628.8 L1547.0 638.1 L1557.0 629.5 L1567.0 638.8 L1577.0 630.2 L1587.0 639.6 L1597.0 630.9 L1607.0 640.3 L1617.0 631.7 L1627.0 641.0 L1637.0 632.4 L1647.0 641.8 L1657.0 633.1" fill="none" stroke="#08a808" stroke-width="1.300" stroke-linejoin="miter"/>
<path d="M734.2 702.8 L677.1 753.0 L625.2 699.4 L679.7 650.9Z" fill="#0b7a0e"/>
<path d="M734.2 702.8 L677.1 753.0 L625.2 699.4 L679.7 650.9Z" fill="none" stroke="#00e800" stroke-width="1.300"/>
<path d="M729.6 702.7 L677.3 748.6 L629.8 699.5 L679.7 655.2Z" fill="none" stroke="#00e800" stroke-width="1.300"/>
<path d="M724.9 702.5 L677.5 744.2 L634.5 699.7 L679.7 659.5Z" fill="none" stroke="#00e800" stroke-width="1.300"/>
<path d="M720.3 702.4 L677.8 739.8 L639.1 699.8 L679.7 663.7Z" fill="none" stroke="#00e800" stroke-width="1.300"/>
<path d="M715.7 702.2 L678.0 735.4 L643.7 700.0 L679.7 668.0Z" fill="none" stroke="#00e800" stroke-width="1.300"/>
<path d="M711.0 702.1 L678.2 731.0 L648.4 700.1 L679.7 672.3Z" fill="none" stroke="#00c400" stroke-width="0.800"/>
<path d="M706.4 702.0 L678.4 726.5 L653.0 700.3 L679.7 676.5Z" fill="none" stroke="#00c400" stroke-width="0.800"/>
<path d="M701.8 701.8 L678.6 722.1 L657.6 700.4 L679.7 680.8Z" fill="none" stroke="#00c400" stroke-width="0.800"/>
<path d="M697.1 701.7 L678.9 717.7 L662.2 700.6 L679.7 685.1Z" fill="none" stroke="#00c400" stroke-width="0.800"/>
<path d="M692.5 701.5 L679.1 713.3 L666.9 700.7 L679.7 689.3Z" fill="none" stroke="#00c400" stroke-width="0.800"/>
<path d="M687.9 701.4 L679.3 708.9 L671.5 700.8 L679.7 693.6Z" fill="none" stroke="#00c400" stroke-width="0.800"/>
<path d="M683.2 701.2 L679.5 704.5 L676.1 701.0 L679.7 697.8Z" fill="none" stroke="#00c400" stroke-width="0.800"/>
<defs><radialGradient id="ringg" cx="0.5" cy="0.45" r="0.55"><stop offset="0.55" stop-color="#8a4214"/><stop offset="0.72" stop-color="#d46c28"/><stop offset="0.88" stop-color="#c86424"/><stop offset="1" stop-color="#8a4012"/></radialGradient></defs>
<path fill-rule="evenodd" fill="url(#ringg)" d="M649 695.500a28 24 0 1 0 56 0a28 24 0 1 0 -56 0Z M658.800 693.700a18.500 16.500 0 1 0 37 0a18.500 16.500 0 1 0 -37 0Z"/>
<ellipse cx="677" cy="695" rx="23.500" ry="20" fill="none" stroke="#f0e6dc" stroke-width="0.900" stroke-dasharray="88 200" stroke-dashoffset="-38"/>
<path d="M666.500 603 Q667 598 673 598 L690 598 Q697.500 599 698 607 L695.500 677 Q680 669 660 679 Z" fill="url(#rodv)"/>
<path d="M661 676 Q678 667 695.500 675.500 L695 682 Q678 676 664 684Z" fill="#93481a"/>
<path d="M667.3 601L661.3 675" stroke="#7a3a10" stroke-opacity="0.15" stroke-width="0.9"/>
<path d="M669.9 601L664.1 675" stroke="#7a3a10" stroke-opacity="0.13" stroke-width="0.9"/>
<path d="M672.0 601L666.3 675" stroke="#7a3a10" stroke-opacity="0.19" stroke-width="0.9"/>
<path d="M673.8 601L668.3 675" stroke="#7a3a10" stroke-opacity="0.22" stroke-width="0.9"/>
<path d="M676.0 601L670.6 675" stroke="#7a3a10" stroke-opacity="0.21" stroke-width="0.9"/>
<path d="M678.3 601L673.1 675" stroke="#7a3a10" stroke-opacity="0.14" stroke-width="0.9"/>
<path d="M680.9 601L675.8 675" stroke="#7a3a10" stroke-opacity="0.29" stroke-width="0.9"/>
<path d="M682.9 601L677.9 675" stroke="#7a3a10" stroke-opacity="0.16" stroke-width="0.9"/>
<path d="M685.6 601L680.8 675" stroke="#7a3a10" stroke-opacity="0.31" stroke-width="0.9"/>
<path d="M687.8 601L683.2 675" stroke="#7a3a10" stroke-opacity="0.20" stroke-width="0.9"/>
<path d="M690.5 601L686.0 675" stroke="#7a3a10" stroke-opacity="0.13" stroke-width="0.9"/>
<path d="M692.6 601L688.3 675" stroke="#7a3a10" stroke-opacity="0.18" stroke-width="0.9"/>
<path d="M694.1 601L689.9 675" stroke="#7a3a10" stroke-opacity="0.14" stroke-width="0.9"/>
<path d="M696.6 601L692.5 675" stroke="#7a3a10" stroke-opacity="0.28" stroke-width="0.9"/>
<path d="M698.7 601L694.8 675" stroke="#7a3a10" stroke-opacity="0.24" stroke-width="0.9"/>
<path d="M681.800 600L677.300 671" stroke="#b82a36" stroke-width="6.200"/>
<path d="M681.800 600L677.300 671" stroke="#7c1820" stroke-width="6.200" stroke-dasharray="0.700 1.100" stroke-opacity="0.600"/>
<path d="M676.300 600L671.800 671M687.200 606L683 671" stroke="#c8b030" stroke-width="0.900"/>
<g transform="translate(688 600.500) skewY(2.090)">
<path d="M0 0L987.500 0L987.500 33.900L9.500 32.800Z" fill="url(#rodg)"/>
<path d="M260.7 21.3L684.6 21.5" stroke="#7a3a10" stroke-opacity="0.37" stroke-width="0.9"/>
<path d="M372.2 16.9L910.8 17.1" stroke="#6a3008" stroke-opacity="0.32" stroke-width="0.9"/>
<path d="M556.1 10.8L987.0 10.2" stroke="#8a4414" stroke-opacity="0.27" stroke-width="0.9"/>
<path d="M240.4 16.8L614.9 17.6" stroke="#e88840" stroke-opacity="0.22" stroke-width="0.9"/>
<path d="M530.0 14.5L756.0 14.4" stroke="#6a3008" stroke-opacity="0.47" stroke-width="0.9"/>
<path d="M390.7 3.9L935.2 3.7" stroke="#f09048" stroke-opacity="0.29" stroke-width="0.9"/>
<path d="M557.8 16.9L742.2 17.6" stroke="#7a3a10" stroke-opacity="0.32" stroke-width="0.9"/>
<path d="M42.5 22.1L543.2 22.9" stroke="#e88840" stroke-opacity="0.43" stroke-width="0.9"/>
<path d="M270.1 10.3L754.4 11.0" stroke="#7a3a10" stroke-opacity="0.29" stroke-width="0.9"/>
<path d="M345.6 20.4L604.7 19.9" stroke="#f09048" stroke-opacity="0.25" stroke-width="0.9"/>
<path d="M610.0 13.6L800.3 13.5" stroke="#6a3008" stroke-opacity="0.26" stroke-width="0.9"/>
<path d="M301.4 5.7L726.5 6.5" stroke="#6a3008" stroke-opacity="0.38" stroke-width="0.9"/>
<path d="M161.5 13.3L353.0 12.9" stroke="#8a4414" stroke-opacity="0.25" stroke-width="0.9"/>
<path d="M412.4 16.5L693.8 16.1" stroke="#7a3a10" stroke-opacity="0.34" stroke-width="0.9"/>
<path d="M223.0 20.4L435.8 21.1" stroke="#e88840" stroke-opacity="0.38" stroke-width="0.9"/>
<path d="M319.7 24.4L905.1 24.3" stroke="#e88840" stroke-opacity="0.30" stroke-width="0.9"/>
<path d="M444.0 4.7L625.1 5.5" stroke="#7a3a10" stroke-opacity="0.31" stroke-width="0.9"/>
<path d="M420.5 4.9L621.7 4.4" stroke="#e88840" stroke-opacity="0.21" stroke-width="0.9"/>
<path d="M17.9 12.8L605.0 12.6" stroke="#e88840" stroke-opacity="0.37" stroke-width="0.9"/>
<path d="M421.6 31.1L808.7 31.7" stroke="#7a3a10" stroke-opacity="0.48" stroke-width="0.9"/>
<path d="M338.7 15.9L531.6 16.4" stroke="#7a3a10" stroke-opacity="0.40" stroke-width="0.9"/>
<path d="M484.4 16.3L892.6 17.1" stroke="#8a4414" stroke-opacity="0.34" stroke-width="0.9"/>
<path d="M380.2 6.0L543.7 5.8" stroke="#e88840" stroke-opacity="0.37" stroke-width="0.9"/>
<path d="M591.8 4.3L987.0 4.2" stroke="#8a4414" stroke-opacity="0.25" stroke-width="0.9"/>
<path d="M351.9 18.3L820.1 18.8" stroke="#e88840" stroke-opacity="0.48" stroke-width="0.9"/>
<path d="M564.3 27.9L987.0 27.5" stroke="#8a4414" stroke-opacity="0.33" stroke-width="0.9"/>
<path d="M692.7 24.2L987.0 23.8" stroke="#6a3008" stroke-opacity="0.39" stroke-width="0.9"/>
<path d="M313.1 31.2L931.6 31.9" stroke="#f09048" stroke-opacity="0.29" stroke-width="0.9"/>
<path d="M158.8 8.3L407.1 8.4" stroke="#8a4414" stroke-opacity="0.48" stroke-width="0.9"/>
<path d="M1.3 20.4L605.9 20.9" stroke="#f09048" stroke-opacity="0.21" stroke-width="0.9"/>
<path d="M636.8 22.0L987.0 22.0" stroke="#8a4414" stroke-opacity="0.23" stroke-width="0.9"/>
<path d="M232.8 26.0L783.2 26.0" stroke="#6a3008" stroke-opacity="0.40" stroke-width="0.9"/>
<path d="M111.2 4.1L757.8 3.7" stroke="#7a3a10" stroke-opacity="0.45" stroke-width="0.9"/>
<path d="M102.3 26.5L665.6 26.8" stroke="#6a3008" stroke-opacity="0.29" stroke-width="0.9"/>
<path d="M91.7 18.5L248.8 18.6" stroke="#7a3a10" stroke-opacity="0.46" stroke-width="0.9"/>
<path d="M610.2 14.9L987.0 14.3" stroke="#8a4414" stroke-opacity="0.24" stroke-width="0.9"/>
<path d="M534.6 17.0L847.6 17.0" stroke="#e88840" stroke-opacity="0.22" stroke-width="0.9"/>
<path d="M247.6 29.7L626.7 30.2" stroke="#e88840" stroke-opacity="0.34" stroke-width="0.9"/>
<path d="M614.7 27.1L830.1 27.2" stroke="#8a4414" stroke-opacity="0.19" stroke-width="0.9"/>
<path d="M128.2 15.1L280.1 14.7" stroke="#8a4414" stroke-opacity="0.32" stroke-width="0.9"/>
<path d="M389.5 24.0L702.5 24.1" stroke="#e88840" stroke-opacity="0.32" stroke-width="0.9"/>
<path d="M618.3 25.6L796.7 25.3" stroke="#8a4414" stroke-opacity="0.41" stroke-width="0.9"/>
<path d="M393.2 17.2L923.2 17.2" stroke="#7a3a10" stroke-opacity="0.36" stroke-width="0.9"/>
<path d="M358.5 17.2L854.9 17.2" stroke="#6a3008" stroke-opacity="0.42" stroke-width="0.9"/>
<path d="M173.4 17.2L585.0 17.9" stroke="#f09048" stroke-opacity="0.45" stroke-width="0.9"/>
<path d="M313.3 7.8L671.6 7.7" stroke="#6a3008" stroke-opacity="0.20" stroke-width="0.9"/>
<path d="M10 8L987 8" stroke="#c8a030" stroke-width="0.800" stroke-opacity="0.850"/>
<path d="M0 11.200L987 11.200" stroke="#d0202e" stroke-width="3"/>
<path d="M45 9.700L987 9.700M60 12.900L987 12.900" stroke="#f4f0f0" stroke-width="1.100"/>
<path d="M10 15.700L987 15.700" stroke="#d8c030" stroke-width="0.900" stroke-opacity="0.900"/>
<path d="M987 0L987 33.900" stroke="#7a3610" stroke-width="1.200"/>
<text x="43" y="16.500" font-family="Liberation Sans, sans-serif" font-size="10.500" font-weight="bold" fill="#e09050" stroke="#7a3610" stroke-width="0.400">1CM</text>
<path d="M183 20l2 11l5 0.200l-0.500-11z" fill="#8a3f14"/><path d="M184 21l2 9" stroke="#e8e0d8" stroke-width="1"/>
</g>
<path d="M680 608.500L729 611.500L729 616L680 614.500Z" fill="#c02c38"/>
<path d="M686 606.500L729 609.300M686 617L729 618.500" stroke="#c8b030" stroke-width="0.800"/>
<path d="M547 618L620 555.500" stroke="#00a800" stroke-width="4.800"/><path d="M546.500 617.300L619.500 554.800" stroke="#00dc00" stroke-width="2.200"/><path d="M632 546L610.500 553.500L621.500 566.500Z" fill="#00b800"/><path d="M632 546L610.500 553.500L616 560Z" fill="#00d800"/>
<path d="M547 618L610 685" stroke="#b00000" stroke-width="4.800"/><path d="M547.800 617.300L610.800 684.300" stroke="#e81010" stroke-width="2.200"/><path d="M620 696L600 689L612.500 677Z" fill="#c40000"/><path d="M620 696L606 683L612.500 677Z" fill="#e01010"/>
<path d="M547.500 620L538 592" stroke="#000080" stroke-width="5.200"/><path d="M546 618L537 592" stroke="#0000a8" stroke-width="2"/><path d="M533 581.500 Q543.500 585 543 592 Q540.500 597.500 534 595.500 Q528 591 533 581.500Z" fill="#0000b0"/>
</g></svg>
<div class="abs" style="left:420px;top:67px;width:128px;height:137px;background:#dedede;border-radius:0 0 4px 0"></div>
<div class="abs" style="left:428px;top:75px;width:110px;height:110px;background:#d4d4d4;border:2px solid #2089f0;border-radius:4px;box-shadow:inset 0 0 0 2px #e6e6e6"></div>
<div class="t" style="left:444px;top:91px;font-size:12px;color:#f4f4f4">1</div>
<svg style="left:478px;top:98px" width="12" height="60" viewBox="0 0 12 60"><path d="M4 2.500L4.500 55" stroke="#9a9a9a" stroke-width="1.200"/><path d="M5.200 2.500L5.700 55" stroke="#f0f0f0" stroke-width="0.800"/><path d="M3 54h5l1.500 2" stroke="#8a8a8a" stroke-width="1" fill="none"/></svg>
<div id="legend" class="abs" style="left:1436.500px;top:67px;width:359px;height:520px;background:rgba(23,23,23,0.785)">
<div class="abs" style="left:0;top:0;width:359px;height:30px;background:rgba(0,0,0,0.13)"></div>
<svg style="left:12px;top:10px" width="15" height="11" viewBox="0 0 15 11"><path d="M1.500 5.500l6-4.500 6 4.500M1.500 10l6-4.500 6 4.500" stroke="#fff" stroke-width="1.300" fill="none"/></svg>
<div class="t" style="left:38px;top:9px;font-size:12.600px;font-weight:bold;color:#fff">颜色方案</div>
<div class="abs" style="left:98px;top:8px;width:198px;height:21px;background:#212121;border:1px solid #161616;border-radius:4px"></div>
<svg style="left:104px;top:15px" width="11" height="7" viewBox="0 0 11 7"><path d="M1 1l4.500 4 4.500-4" stroke="#fff" stroke-width="1.200" fill="none"/></svg>
<div class="t" style="left:123px;top:12px;font-size:12.600px;color:#fff">走线类型</div>
<div class="t" style="left:11px;top:34px;font-size:12.600px;font-weight:bold;color:#fff">走线类型</div>
<div class="t" style="left:110px;top:34px;font-size:12.600px;font-weight:bold;color:#fff">时间</div>
<div class="t" style="left:165px;top:34px;font-size:12.600px;font-weight:bold;color:#fff">百分比</div>
<div class="t" style="left:220px;top:34px;font-size:12.600px;font-weight:bold;color:#fff">使用的耗材丝</div>
<div class="t" style="left:321px;top:34px;font-size:12.600px;font-weight:bold;color:#fff">显示</div>
<div class="abs" style="left:0;top:52px;width:359px;height:1px;background:#b8b8b8"></div>
<div class="abs" style="left:11.500px;top:58.5px;width:9.500px;height:9.500px;background:#ffe64d"></div>
<div class="t lg" style="left:29px;top:56.5px">内墙</div>
<div class="t lg" style="left:110px;top:56.5px">1m19s</div>
<div class="t lg" style="left:165px;top:56.5px">6.3%</div>
<div class="t lg" style="left:220px;top:56.5px">0.49 m</div>
<div class="t lg" style="left:268px;top:56.5px">1.48 g</div>
<div class="abs" style="left:325px;top:55.5px;width:15px;height:15px;background:rgba(120,120,120,0.45)"></div>
<svg style="left:327px;top:58.5px" width="11" height="9" viewBox="0 0 11 9"><path d="M0.800 4.500l3.200 3.200L10.200 1" stroke="#00b445" stroke-width="2" fill="none"/></svg>
<div class="abs" style="left:11.500px;top:79.5px;width:9.500px;height:9.500px;background:#ff7d38"></div>
<div class="t lg" style="left:29px;top:77.5px">外墙</div>
<div class="t lg" style="left:110px;top:77.5px">2m38s</div>
<div class="t lg" style="left:165px;top:77.5px">12.6%</div>
<div class="t lg" style="left:220px;top:77.5px">0.48 m</div>
<div class="t lg" style="left:268px;top:77.5px">1.44 g</div>
<div class="abs" style="left:325px;top:76.5px;width:15px;height:15px;background:rgba(120,120,120,0.45)"></div>
<svg style="left:327px;top:79.5px" width="11" height="9" viewBox="0 0 11 9"><path d="M0.800 4.500l3.200 3.200L10.200 1" stroke="#00b445" stroke-width="2" fill="none"/></svg>
<div class="abs" style="left:11.500px;top:100.5px;width:9.500px;height:9.500px;background:#1f1fff"></div>
<div class="t lg" style="left:29px;top:98.5px">悬空墙</div>
<div class="t lg" style="left:110px;top:98.5px">9s</div>
<div class="t lg" style="left:165px;top:98.5px">0.7%</div>
<div class="t lg" style="left:220px;top:98.5px">0.02 m</div>
<div class="t lg" style="left:268px;top:98.5px">0.05 g</div>
<div class="abs" style="left:325px;top:97.5px;width:15px;height:15px;background:rgba(120,120,120,0.45)"></div>
<svg style="left:327px;top:100.5px" width="11" height="9" viewBox="0 0 11 9"><path d="M0.800 4.500l3.200 3.200L10.200 1" stroke="#00b445" stroke-width="2" fill="none"/></svg>
<div class="abs" style="left:11.500px;top:121.5px;width:9.500px;height:9.500px;background:#b03029"></div>
<div class="t lg" style="left:29px;top:119.5px">稀疏填充</div>
<div class="t lg" style="left:110px;top:119.5px">2m9s</div>
<div class="t lg" style="left:165px;top:119.5px">10.3%</div>
<div class="t lg" style="left:220px;top:119.5px">0.44 m</div>
<div class="t lg" style="left:268px;top:119.5px">1.33 g</div>
<div class="abs" style="left:325px;top:118.5px;width:15px;height:15px;background:rgba(120,120,120,0.45)"></div>
<svg style="left:327px;top:121.5px" width="11" height="9" viewBox="0 0 11 9"><path d="M0.800 4.500l3.200 3.200L10.200 1" stroke="#00b445" stroke-width="2" fill="none"/></svg>
<div class="abs" style="left:11.500px;top:142.5px;width:9.500px;height:9.500px;background:#9654cc"></div>
<div class="t lg" style="left:29px;top:140.5px">内部实心填充</div>
<div class="t lg" style="left:110px;top:140.5px">1m19s</div>
<div class="t lg" style="left:165px;top:140.5px">6.3%</div>
<div class="t lg" style="left:220px;top:140.5px">0.50 m</div>
<div class="t lg" style="left:268px;top:140.5px">1.52 g</div>
<div class="abs" style="left:325px;top:139.5px;width:15px;height:15px;background:rgba(120,120,120,0.45)"></div>
<svg style="left:327px;top:142.5px" width="11" height="9" viewBox="0 0 11 9"><path d="M0.800 4.500l3.200 3.200L10.200 1" stroke="#00b445" stroke-width="2" fill="none"/></svg>
<div class="abs" style="left:11.500px;top:163.5px;width:9.500px;height:9.500px;background:#f04040"></div>
<div class="t lg" style="left:29px;top:161.5px">顶面</div>
<div class="t lg" style="left:110px;top:161.5px">3s</div>
<div class="t lg" style="left:165px;top:161.5px">0.2%</div>
<div class="t lg" style="left:220px;top:161.5px">0.01 m</div>
<div class="t lg" style="left:268px;top:161.5px">0.02 g</div>
<div class="abs" style="left:325px;top:160.5px;width:15px;height:15px;background:rgba(120,120,120,0.45)"></div>
<svg style="left:327px;top:163.5px" width="11" height="9" viewBox="0 0 11 9"><path d="M0.800 4.500l3.200 3.200L10.200 1" stroke="#00b445" stroke-width="2" fill="none"/></svg>
<div class="abs" style="left:11.500px;top:184.5px;width:9.500px;height:9.500px;background:#ffffff"></div>
<div class="t lg" style="left:29px;top:182.5px">填缝</div>
<div class="t lg" style="left:110px;top:182.5px">9s</div>
<div class="t lg" style="left:165px;top:182.5px">0.7%</div>
<div class="t lg" style="left:220px;top:182.5px">0.03 m</div>
<div class="t lg" style="left:268px;top:182.5px">0.08 g</div>
<div class="abs" style="left:325px;top:181.5px;width:15px;height:15px;background:rgba(120,120,120,0.45)"></div>
<svg style="left:327px;top:184.5px" width="11" height="9" viewBox="0 0 11 9"><path d="M0.800 4.500l3.200 3.200L10.200 1" stroke="#00b445" stroke-width="2" fill="none"/></svg>
<div class="abs" style="left:11.500px;top:205.5px;width:9.500px;height:9.500px;background:#00ff00"></div>
<div class="t lg" style="left:29px;top:203.5px">支撑</div>
<div class="t lg" style="left:110px;top:203.5px">2m46s</div>
<div class="t lg" style="left:165px;top:203.5px">13.3%</div>
<div class="t lg" style="left:220px;top:203.5px">0.19 m</div>
<div class="t lg" style="left:268px;top:203.5px">0.57 g</div>
<div class="abs" style="left:325px;top:202.5px;width:15px;height:15px;background:rgba(120,120,120,0.45)"></div>
<svg style="left:327px;top:205.5px" width="11" height="9" viewBox="0 0 11 9"><path d="M0.800 4.500l3.200 3.200L10.200 1" stroke="#00b445" stroke-width="2" fill="none"/></svg>
<div class="abs" style="left:11.500px;top:226.5px;width:9.500px;height:9.500px;background:#008000"></div>
<div class="t lg" style="left:29px;top:224.5px">支撑面</div>
<div class="t lg" style="left:110px;top:224.5px">2m1s</div>
<div class="t lg" style="left:165px;top:224.5px">9.7%</div>
<div class="t lg" style="left:220px;top:224.5px">0.13 m</div>
<div class="t lg" style="left:268px;top:224.5px">0.38 g</div>
<div class="abs" style="left:325px;top:223.5px;width:15px;height:15px;background:rgba(120,120,120,0.45)"></div>
<svg style="left:327px;top:226.5px" width="11" height="9" viewBox="0 0 11 9"><path d="M0.800 4.500l3.200 3.200L10.200 1" stroke="#00b445" stroke-width="2" fill="none"/></svg>
<div class="abs" style="left:11.500px;top:247.5px;width:9.500px;height:9.500px;background:#5ed194"></div>
<div class="t lg" style="left:29px;top:245.5px">自定义</div>
<div class="t lg" style="left:110px;top:245.5px">5m43s</div>
<div class="t lg" style="left:165px;top:245.5px">27.2%</div>
<div class="t lg" style="left:220px;top:245.5px">0.02 m</div>
<div class="t lg" style="left:268px;top:245.5px">0.07 g</div>
<div class="abs" style="left:325px;top:244.5px;width:15px;height:15px;background:rgba(120,120,120,0.45)"></div>
<svg style="left:327px;top:247.5px" width="11" height="9" viewBox="0 0 11 9"><path d="M0.800 4.500l3.200 3.200L10.200 1" stroke="#00b445" stroke-width="2" fill="none"/></svg>
<div class="abs" style="left:11.500px;top:268.5px;width:9.500px;height:9.500px;background:#38489b"></div>
<div class="t lg" style="left:29px;top:266.5px">空驶</div>
<div class="t lg" style="left:110px;top:266.5px">2m53s</div>
<div class="t lg" style="left:165px;top:266.5px">13.8%</div>
<div class="abs" style="left:325px;top:265.5px;width:15px;height:15px;background:rgba(120,120,120,0.45)"></div>
<div class="abs" style="left:11.500px;top:289.5px;width:9.500px;height:9.500px;background:#cd22d6"></div>
<div class="t lg" style="left:29px;top:287.5px">回抽</div>
<div class="abs" style="left:325px;top:286.5px;width:15px;height:15px;background:rgba(120,120,120,0.45)"></div>
<div class="abs" style="left:11.500px;top:310.5px;width:9.500px;height:9.500px;background:#49adcf"></div>
<div class="t lg" style="left:29px;top:308.5px">装填回抽</div>
<div class="abs" style="left:325px;top:307.5px;width:15px;height:15px;background:rgba(120,120,120,0.45)"></div>
<div class="abs" style="left:11.500px;top:331.5px;width:9.500px;height:9.500px;background:#ffff00"></div>
<div class="t lg" style="left:29px;top:329.5px">擦拭</div>
<div class="abs" style="left:325px;top:328.5px;width:15px;height:15px;background:rgba(120,120,120,0.45)"></div>
<div class="abs" style="left:11.500px;top:352.5px;width:9.500px;height:9.500px;background:#e6e6e6"></div>
<div class="t lg" style="left:29px;top:350.5px">缝</div>
<div class="abs" style="left:325px;top:349.5px;width:15px;height:15px;background:rgba(120,120,120,0.45)"></div>
<svg style="left:327px;top:352.5px" width="11" height="9" viewBox="0 0 11 9"><path d="M0.800 4.500l3.200 3.200L10.200 1" stroke="#00b445" stroke-width="2" fill="none"/></svg>
<div class="t" style="left:11px;top:381px;font-size:12.600px;font-weight:bold;color:#fff">总预估</div>
<div class="abs" style="left:0;top:399px;width:359px;height:1px;background:#b8b8b8"></div>
<div class="t lg" style="left:11px;top:404.0px">总耗材丝:</div>
<div class="t lg" style="left:96px;top:404.0px">2.29 m</div>
<div class="t lg" style="left:151px;top:404.0px">6.94 g</div>
<div class="t lg" style="left:11px;top:423.0px">模型耗材丝:</div>
<div class="t lg" style="left:96px;top:423.0px">1.98 m</div>
<div class="t lg" style="left:151px;top:423.0px">5.99 g</div>
<div class="t lg" style="left:11px;top:442.0px">成本:</div>
<div class="t lg" style="left:96px;top:442.0px">0.17</div>
<div class="t lg" style="left:11px;top:461.0px">准备时间:</div>
<div class="t lg" style="left:96px;top:461.0px">5m27s</div>
<div class="t lg" style="left:11px;top:480.0px">模型打印时间:</div>
<div class="t lg" style="left:96px;top:480.0px">15m31s</div>
<div class="t lg" style="left:11px;top:499.0px">总时间:</div>
<div class="t lg" style="left:96px;top:499.0px">20m59s</div>
</div>
<div class="abs" style="left:1874px;top:188px;width:24px;height:732px;background:#fff;border-radius:12px"></div>
<div class="abs" style="left:1880px;top:196px;width:12px;height:718px;background:#00ae42;border-radius:6px"></div>
<div class="abs" style="left:1876px;top:190px;width:20px;height:20px;background:#00ae42;border-radius:10px;box-shadow:0 0 0 1.600px #fff"></div>
<svg style="left:1880px;top:194px" width="12" height="12" viewBox="0 0 12 12"><path d="M6 0.500v11M0.500 6h11" stroke="#fff" stroke-width="1.200"/></svg>
<div class="abs" style="left:1876px;top:897px;width:20px;height:20px;background:#00ae42;border-radius:10px;box-shadow:0 0 0 1.600px #fff"></div>
<div class="abs" style="left:1826px;top:166px;width:39px;height:34px;background:#fff;border-radius:2px"></div>
<svg style="left:1862px;top:190px" width="10" height="10" viewBox="0 0 10 10"><path d="M0 0L3 0L9 9.500L0 9.500Z" fill="#fff"/></svg>
<div class="t" style="left:1829px;top:169px;width:39px;text-align:center;font-size:12px;color:#00ae42;line-height:14.500px">42<br>7.60</div>
<div class="abs" style="left:1826px;top:906px;width:39px;height:34px;background:#fff;border-radius:2px"></div>
<div class="t" style="left:1826px;top:909px;width:39px;text-align:center;font-size:12px;color:#00ae42;line-height:14.500px">1<br>0.20</div>
<div class="abs" style="left:724px;top:994px;width:842px;height:24px;background:#fff;border-radius:12px"></div>
<div class="abs" style="left:730px;top:1000px;width:826px;height:12px;background:#00ae42;border-radius:6px"></div>
<div class="abs" style="left:1544px;top:996px;width:20px;height:20px;background:#00ae42;border-radius:10px;box-shadow:0 0 0 1.600px #fff"></div>
<div class="abs" style="left:1574px;top:996px;width:25px;height:19px;background:#fff;border-radius:2px"></div>
<svg style="left:1568px;top:1001px" width="7" height="9" viewBox="0 0 7 9"><path d="M7 0L0 4.500L7 9Z" fill="#fff"/></svg>
<div class="t" style="left:1574px;top:999.500px;width:25px;text-align:center;font-size:12px;color:#00ae42">51</div>
<svg style="left:1876px;top:996px" width="20" height="20" viewBox="0 0 20 20"><path d="M10 1.500L19 6.500L10 11.500L1 6.500Z" fill="#00ae42"/><path d="M2.500 9.800L10 14L17.500 9.800M2.500 13.300L10 17.500L17.500 13.300" stroke="#00ae42" stroke-width="2.200" fill="none" stroke-linejoin="round"/></svg>
<div class="abs" style="left:1900.500px;top:350px;width:47px;height:47px;border-radius:24px;background:radial-gradient(circle at 38% 22%,#8fe8a0 0%,#55d06c 30%,#48c860 100%);border:2.500px solid #f0f2f0;box-shadow:0 0 0 0.800px #a6aaa6, inset 0 0 0 1px #1f9a45, 3px 5px 7px rgba(0,0,0,0.32)"></div>
<div class="t" style="left:1906.500px;top:368px;font-size:10.500px;font-weight:bold;color:#fff;letter-spacing:0.300px">67</div>
<svg id="avatar" style="left:1763px;top:818.500px" width="152" height="90.500" viewBox="0 0 152 90.500">
<defs>
<linearGradient id="avbg" x1="0" y1="0" x2="1" y2="0"><stop offset="0" stop-color="#f6e6f1"/><stop offset="0.200" stop-color="#f7f3f7"/><stop offset="0.450" stop-color="#f3ecf4"/><stop offset="0.620" stop-color="#ecd6f0"/><stop offset="0.850" stop-color="#e6c4ec"/><stop offset="1" stop-color="#e9c9ef"/></linearGradient>
<clipPath id="avc"><rect x="0.500" y="0.500" width="151" height="89.500" rx="7"/></clipPath>
<filter id="avb" x="-20%" y="-20%" width="140%" height="140%"><feGaussianBlur stdDeviation="2.500"/></filter>
<filter id="avb1" x="-20%" y="-20%" width="140%" height="140%"><feGaussianBlur stdDeviation="0.700"/></filter>
</defs>
<rect x="0.500" y="0.500" width="151" height="89.500" rx="7" fill="url(#avbg)"/>
<g clip-path="url(#avc)">
<g filter="url(#avb)">
<path d="M4 18Q8 2 22 1L26 6Q14 8 12 22Z" fill="#f29bb0"/>
<ellipse cx="14" cy="84" rx="26" ry="10" fill="#f0c0e4"/>
<ellipse cx="60" cy="86" rx="20" ry="7" fill="#efc6e6"/>
<ellipse cx="128" cy="60" rx="30" ry="22" fill="#ecd0f2"/>
<ellipse cx="138" cy="12" rx="20" ry="10" fill="#dfb4ea"/>
<ellipse cx="120" cy="86" rx="34" ry="8" fill="#e4b8e8"/>
<path d="M112 18Q130 10 152 20L150 28Q132 22 118 30Z" fill="#e07ab0"/>
</g>
<g filter="url(#avb1)">
<path d="M63 14Q66 7 73 5L80 3Q82 1 84 3L87 5.500Q88 9 86 13Q94 13 102 12L105 9.500Q110 14 117 17Q122 22 124.500 26.700Q119 31 112 36Q107 40 102 40Q98 36 94.700 35Q92 40 88 40L80 34L76 24Q70 18 66 26L67 35L64 40Q62 26 63 14Z" fill="#3a2342"/>
<path d="M108 16Q118 14 128 17Q138 18 150 22Q140 27 130 26Q124 32 116 30Z" fill="#c0609c" opacity="0.750"/>
<path d="M104 24l3 1-2 3zM110 28l3 0-1 3zM99 30l2 2-3 1z" fill="#e8506e"/>
<path d="M67 16Q72 13 76 18L77 27Q75 33 71 32Q67 28 67 16Z" fill="#ead2d4"/>
<path d="M72 28.500l3 0.500-1.500 1.200z" fill="#c03050"/>
<path d="M73.500 32L80 34L81 40L74 40Z" fill="#2a2030"/>
<path d="M58 41Q66 38 74 40L82 40Q92 39 101.500 42L97 52Q90 58 86 66Q82 72 84 78L92 90.500L56 90.500L58 76Q55 66 55 60Q50 52 53 46Z" fill="#231b29"/>
<path d="M62 47Q70 52 68 62Q76 56 78 46" fill="none" stroke="#4a3c58" stroke-width="1.500"/>
<path d="M57.500 44Q60 52 61 58M87 43Q90 50 88 56" stroke="#7a46c4" stroke-width="1.100" fill="none"/>
<path d="M58 72Q70 74 82 70" stroke="#6a40a8" stroke-width="1.200" fill="none"/>
<path d="M50.500 41L58 43.500L50 64L44 76L35 73L42 58Z" fill="#1e1824"/>
<path d="M40 70L48 46" stroke="#4a4058" stroke-width="1"/>
<path d="M87 43L101.500 42L104 56L115 74.500L112 79.500L100 68L94 58Z" fill="#1e1824"/>
<path d="M98 46L110 74" stroke="#4a4058" stroke-width="1.100"/>
<path d="M47 37L46.500 27L49 23L52 25L55 30L54 37L50.500 41Z" fill="#ecd4d2"/>
<path d="M113 75L122 74L131 72.500L128 76L134 79L130 80L135 83.500L124 81L116 80Z" fill="#ecd0cc"/>
<path d="M51 10L54 8L57 12L56 18L58 24L55 32L52 26L50 20L48.500 14Z" fill="#d8c8ee"/>
<path d="M52 11L55 13L54 20L56 27" stroke="#8a5cc0" stroke-width="0.900" fill="none"/>
</g>
<ellipse cx="117" cy="58" rx="1.700" ry="2.800" fill="#ec3c78" transform="rotate(-20 117 58)"/>
<ellipse cx="83" cy="72" rx="1.200" ry="2.600" fill="#f090a8" transform="rotate(-30 83 72)"/>
<ellipse cx="3.500" cy="40" rx="1.200" ry="3" fill="#f07c94"/>
<ellipse cx="133" cy="70" rx="0.900" ry="2.800" fill="#f0a898"/>
<ellipse cx="3" cy="58" rx="2" ry="3.500" fill="#f6b4c4" transform="rotate(-25 3 58)"/>
<circle cx="147" cy="5" r="1" fill="#e83c90"/>
</g>
<rect x="0.500" y="0.500" width="151" height="89.500" rx="7" fill="none" stroke="#c9a2f0" stroke-width="1"/>
<text x="14.500" y="24.500" font-family="Noto Serif CJK SC, serif" font-weight="bold" font-size="13" fill="#0c0c0c" transform="rotate(6 20 18)">中</text>
<text x="17.500" y="41.500" font-family="Noto Serif CJK SC, serif" font-weight="bold" font-size="8" fill="#0c0c0c">小</text>
<text x="14.500" y="62" font-family="Noto Serif CJK SC, serif" font-weight="bold" font-size="13" fill="#0c0c0c" transform="rotate(4 20 56)">荷</text>
<path d="M15 73l4-2.500q2 2 4.500 0l4 2.500l-2 3.500h-1.700v5h-5.200V76.500H17z" fill="#0c0c0c"/>
</svg>
</body></html>
